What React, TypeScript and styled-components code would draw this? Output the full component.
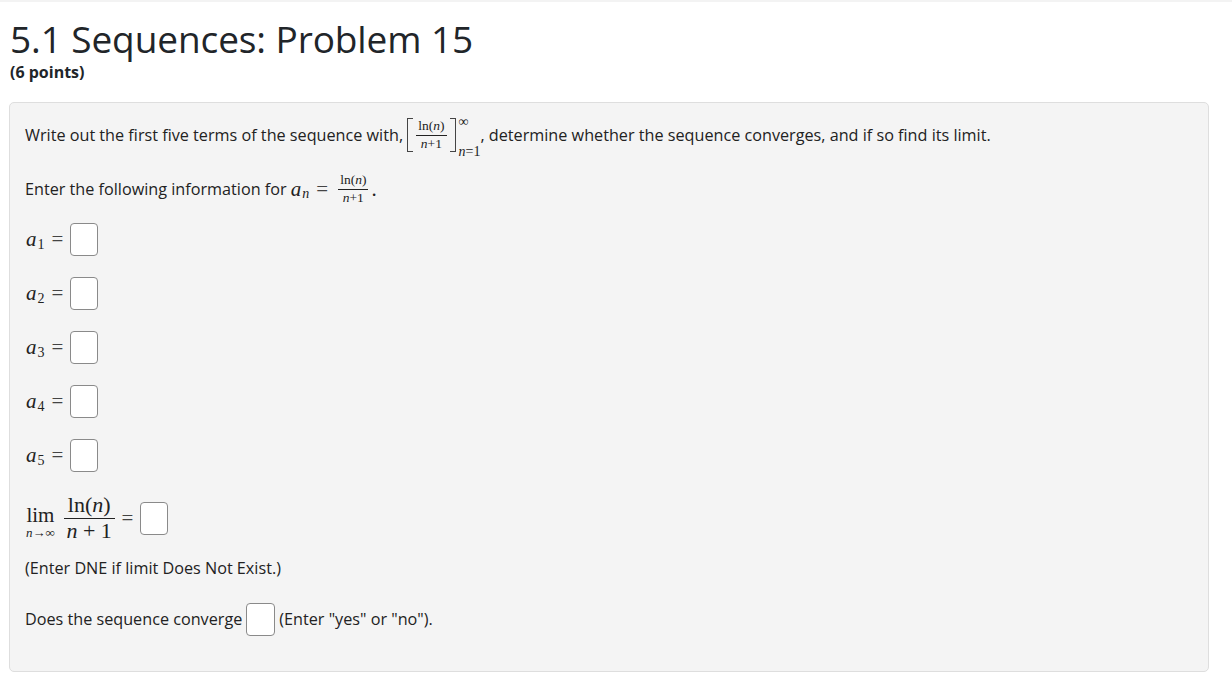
import React from 'react';
import styled, { createGlobalStyle } from 'styled-components';

const GlobalStyle = createGlobalStyle`
  html, body {
    margin: 0;
    padding: 0;
    background: #ffffff;
  }
  body {
    font-family: "Open Sans", "Noto Sans", sans-serif;
    color: #212529;
  }
`;

const Page = styled.div`
  width: 1232px;
  height: 682px;
  box-sizing: border-box;
  padding: 0 23px 0 9px;
  border-top: 2px solid #f3f3f3;
`;

const Header = styled.div`
  padding: 18px 0 0 1px;
`;

const Title = styled.h1`
  margin: 0;
  font-size: 37px;
  font-weight: 500;
  line-height: 38px;
  letter-spacing: -0.1px;
  color: #212529;
`;

const Points = styled.div`
  font-size: 16px;
  font-weight: 700;
  line-height: 20px;
  margin-top: 4px;
`;

const Card = styled.div`
  margin-top: 20px;
  background: #f4f4f4;
  border: 1px solid #dedede;
  border-radius: 5px;
  box-sizing: border-box;
  height: 570px;
  padding: 10px 15px;
  font-size: 16.2px;
  color: #222;
`;

const Para = styled.div<{ $gap?: number }>`
  display: flex;
  align-items: center;
  min-height: 40px;
  margin-top: ${p => p.$gap ?? 0}px;
  white-space: nowrap;
`;

const Math = styled.span`
  font-family: "Liberation Serif", "DejaVu Serif", serif;
  font-size: 21px;
  display: inline-flex;
  align-items: center;
  color: #222;
`;

const Var = styled.i`
  font-style: italic;
`;

const Sub = styled.span`
  font-size: 14px;
  font-style: normal;
  position: relative;
  top: 5px;
  margin-left: 1px;
`;

const Eq = styled.span`
  margin: 0 7px;
  color: #444;
`;

const Frac = styled.span`
  display: inline-flex;
  flex-direction: column;
  align-items: center;
  font-size: 13.5px;
  line-height: 1.1;
  margin: 0 3px;
`;

const Num = styled.span`
  padding: 0 2px 1px;
  border-bottom: 1px solid #222;
`;

const Den = styled.span`
  padding-top: 1px;
`;

const Bracket = styled.span`
  display: inline-block;
  width: 6px;
  height: 34px;
  border: 1.4px solid #444;
  box-sizing: border-box;
`;

const LeftBracket = styled(Bracket)`
  border-right: none;
`;

const RightBracket = styled(Bracket)`
  border-left: none;
`;

const Limits = styled.span`
  display: inline-flex;
  flex-direction: column;
  justify-content: space-between;
  height: 44px;
  font-size: 14px;
  line-height: 14px;
  margin-left: 3px;
  position: relative;
  top: 2px;
`;

const Answer = styled.span<{ $w?: number }>`
  display: inline-block;
  width: ${p => p.$w ?? 28}px;
  height: 33px;
  background: #fff;
  border: 1px solid #8a8a8a;
  border-radius: 4px;
  box-sizing: border-box;
  vertical-align: middle;
`;

const TermRow = styled.div<{ $gap?: number; $h?: number }>`
  display: flex;
  align-items: center;
  height: ${p => p.$h ?? 33}px;
  margin-top: ${p => p.$gap ?? 21}px;
  padding-left: 1px;
`;

const LimBlock = styled.span`
  display: inline-flex;
  flex-direction: column;
  align-items: center;
  margin-right: 9px;
  position: relative;
  top: 4px;
`;

const LimWord = styled.span`
  font-size: 21px;
  line-height: 20px;
`;

const LimSub = styled.span`
  font-size: 13px;
  line-height: 15px;
  font-style: italic;
`;

const BigFrac = styled.span`
  display: inline-flex;
  flex-direction: column;
  align-items: center;
  font-size: 22px;
  line-height: 22px;
`;

const BigNum = styled.span`
  padding: 0 4px 2px;
  border-bottom: 1.3px solid #222;
`;

const BigDen = styled.span`
  padding-top: 1px;
`;

const Inline = styled.span`
  margin: 0 4px;
  display: inline-flex;
`;

const lnFrac = () => (
  <Frac>
    <Num>ln(<Var>n</Var>)</Num>
    <Den><Var>n</Var>+1</Den>
  </Frac>
);

const Term: React.FC<{ k: number; gap?: number }> = ({ k, gap }) => (
  <TermRow $gap={gap}>
    <Math>
      <Var>a</Var>
      <Sub>{k}</Sub>
      <Eq>=</Eq>
    </Math>
    <Answer />
  </TermRow>
);

export default function App() {
  return (
    <>
      <GlobalStyle />
      <Page>
        <Header>
          <Title>5.1 Sequences: Problem 15</Title>
          <Points>(6 points)</Points>
        </Header>
        <Card>
          <Para $gap={0}>
            Write out the first five terms of the sequence with,&nbsp;
            <Math>
              <LeftBracket />
              {lnFrac()}
              <RightBracket />
              <Limits>
                <span>∞</span>
                <span><Var>n</Var>=1</span>
              </Limits>
            </Math>
            , determine whether the sequence converges, and if so find its limit.
          </Para>
          <Para $gap={12}>
            Enter the following information for&nbsp;
            <Math>
              <Var>a</Var>
              <Sub><Var>n</Var></Sub>
              <Eq>=</Eq>
              {lnFrac()}
              .
            </Math>
          </Para>
          {[1, 2, 3, 4, 5].map(k => (
            <Term key={k} k={k} gap={k === 1 ? 14 : 21} />
          ))}
          <TermRow $gap={23} $h={46}>
            <Math>
              <LimBlock>
                <LimWord>lim</LimWord>
                <LimSub>n→∞</LimSub>
              </LimBlock>
              <BigFrac>
                <BigNum>ln(<Var>n</Var>)</BigNum>
                <BigDen><Var>n</Var> + 1</BigDen>
              </BigFrac>
              <Eq>=</Eq>
            </Math>
            <Answer />
          </TermRow>
          <Para $gap={7}>(Enter DNE if limit Does Not Exist.)</Para>
          <Para $gap={11}>
            Does the sequence converge
            <Inline><Answer $w={29} /></Inline>
            (Enter "yes" or "no").
          </Para>
        </Card>
      </Page>
    </>
  );
}
